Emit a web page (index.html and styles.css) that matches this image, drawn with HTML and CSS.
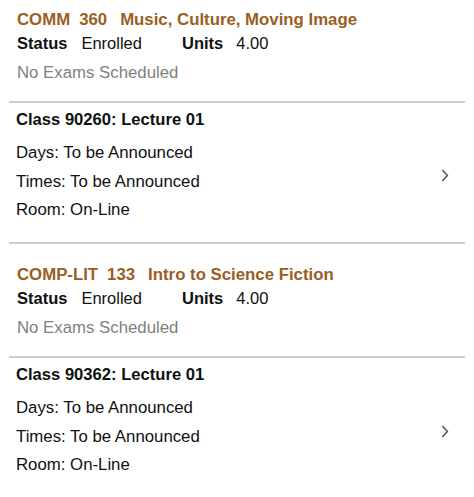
FILE: index.html
```html
<!DOCTYPE html>
<html>
<head>
<meta charset="utf-8">
<link rel="stylesheet" href="styles.css">
</head>
<body>
<div class="list">
  <section class="course">
    <div class="title"><span class="code">COMM</span><span class="num">360</span><span class="name">Music, Culture, Moving Image</span></div>
    <div class="meta"><b>Status</b><span class="val">Enrolled</span><b class="units">Units</b><span>4.00</span></div>
    <div class="exams">No Exams Scheduled</div>
  </section>
  <section class="class-row">
    <div class="info">
      <div class="class-title">Class 90260: Lecture 01</div>
      <div class="line">Days: To be Announced</div>
      <div class="line">Times: To be Announced</div>
      <div class="line">Room: On-Line</div>
    </div>
    <svg class="chev" width="8" height="13" viewBox="0 0 8 13"><path d="M1.3 1 L6.4 6.5 L1.3 12" fill="none" stroke="#555" stroke-width="1.5"/></svg>
  </section>
  <section class="course second">
    <div class="title"><span class="code">COMP-LIT</span><span class="num">133</span><span class="name">Intro to Science Fiction</span></div>
    <div class="meta"><b>Status</b><span class="val">Enrolled</span><b class="units">Units</b><span>4.00</span></div>
    <div class="exams">No Exams Scheduled</div>
  </section>
  <section class="class-row last">
    <div class="info">
      <div class="class-title">Class 90362: Lecture 01</div>
      <div class="line">Days: To be Announced</div>
      <div class="line">Times: To be Announced</div>
      <div class="line">Room: On-Line</div>
    </div>
    <svg class="chev" width="8" height="13" viewBox="0 0 8 13"><path d="M1.3 1 L6.4 6.5 L1.3 12" fill="none" stroke="#555" stroke-width="1.5"/></svg>
  </section>
</div>
</body>
</html>
```
FILE: styles.css
```css
html, body {
  margin: 0;
  padding: 0;
  background: #fff;
}
body {
  font-family: "Liberation Sans", Arial, sans-serif;
  color: #111;
}
.list {
  margin: 0 9px;
}
.course {
  padding: 10px 0 0 8px;
  height: 103px;
  box-sizing: border-box;
  border-bottom: 2px solid #cdcdcd;
}
.course.second {
  padding-top: 21px;
  height: 114px;
}
.title {
  font-weight: bold;
  font-size: 16.8px;
  line-height: 20px;
  color: #9a5e24;
}
.title .num { margin-left: 9px; }
.title .name { margin-left: 13px; }
.meta {
  margin-top: 2px;
  font-size: 16.5px;
  line-height: 23px;
}
.meta .val { margin-left: 14px; }
.meta .units { margin-left: 40px; margin-right: 13px; }
.exams {
  margin-top: 7px;
  font-size: 16.8px;
  line-height: 22px;
  color: #7f7f7f;
}
.class-row {
  display: flex;
  align-items: center;
  justify-content: space-between;
  padding: 6px 16px 0 7px;
  height: 141px;
  box-sizing: border-box;
  border-bottom: 2px solid #cdcdcd;
}
.class-row.last {
  border-bottom: none;
}
.info {
  align-self: flex-start;
}
.class-title {
  font-weight: bold;
  font-size: 16.6px;
  line-height: 22px;
  margin-bottom: 8px;
}
.line {
  font-size: 16.8px;
  line-height: 28.5px;
}
.chev {
  margin-top: 0;
}
```
